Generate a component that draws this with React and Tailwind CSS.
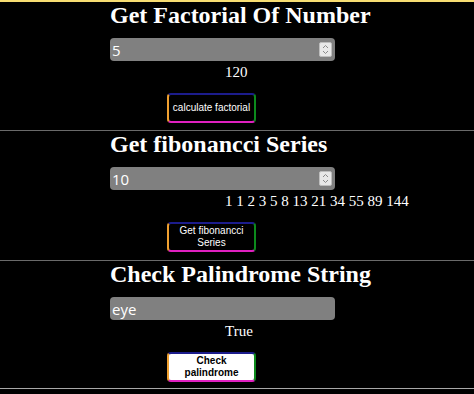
import React from "react";

const serif = { fontFamily: '"Liberation Serif", "Times New Roman", serif' };

function Spinner() {
  return (
    <span className="absolute right-[3px] top-[4px] w-[13px] h-[15px] bg-[#e8e8e8] border border-[#bdbdbd] rounded-[2px] flex flex-col items-center justify-center">
      <svg width="7" height="11" viewBox="0 0 7 11" fill="none" stroke="#8a8a8a" strokeWidth="1">
        <path d="M1 4 L3.5 1.5 L6 4" />
        <path d="M1 7 L3.5 9.5 L6 7" />
      </svg>
    </span>
  );
}

function Field({ value, spin }) {
  return (
    <div className="relative ml-[110px] w-[225px] h-[23px] rounded-[4px] bg-[#808080]">
      <input
        readOnly
        value={value}
        className="w-full h-full bg-transparent outline-none text-white pl-[2px] text-[15px] font-['Open_Sans',sans-serif]"
      />
      {spin && <Spinner />}
    </div>
  );
}

function RainbowButton({ children, light }) {
  return (
    <button
      className={
        "ml-[167px] w-[89px] h-[30px] rounded-[4px] border-2 border-l-[#f0a030] border-t-[#1c1c8c] border-r-[#0c8a1c] border-b-[#e020c0] text-[10px] leading-[12px] font-['Liberation_Sans',Arial,sans-serif] " +
        (light ? "bg-white text-black font-bold text-[10.5px]" : "bg-black text-white")
      }
    >
      {children}
    </button>
  );
}

function Section({ title, value, spin, result, button, light, className }) {
  return (
    <section className={"border-b flex flex-col " + className}>
      <h2 style={serif} className="text-white font-bold text-[24px] leading-[27px]">
        <span className="pl-[110px]">{title}</span>
      </h2>
      <div className="mt-[9px]">
        <Field value={value} spin={spin} />
      </div>
      <div style={serif} className="text-white text-[15px] leading-[18px] pl-[225px] mt-[2px]">
        {result}
      </div>
      <div className="mt-[12px]">
        <RainbowButton light={light}>{button}</RainbowButton>
      </div>
    </section>
  );
}

export default function App() {
  return (
    <div className="w-[474px] h-[394px] bg-black border-t-2 border-[#f7dd72] overflow-hidden">
      <Section
        className="h-[129px] border-[#6a6a6a]"
        title="Get Factorial Of Number"
        value="5"
        spin
        result="120"
        button="calculate factorial"
      />
      <Section
        className="h-[130px] border-[#6a6a6a]"
        title="Get fibonancci Series"
        value="10"
        spin
        result="1 1 2 3 5 8 13 21 34 55 89 144"
        button={<>Get fibonancci<br />Series</>}
      />
      <Section
        className="h-[128px] border-[#a8a8a8]"
        title="Check Palindrome String"
        value="eye"
        result="True"
        light
        button={<>Check<br />palindrome</>}
      />
    </div>
  );
}
